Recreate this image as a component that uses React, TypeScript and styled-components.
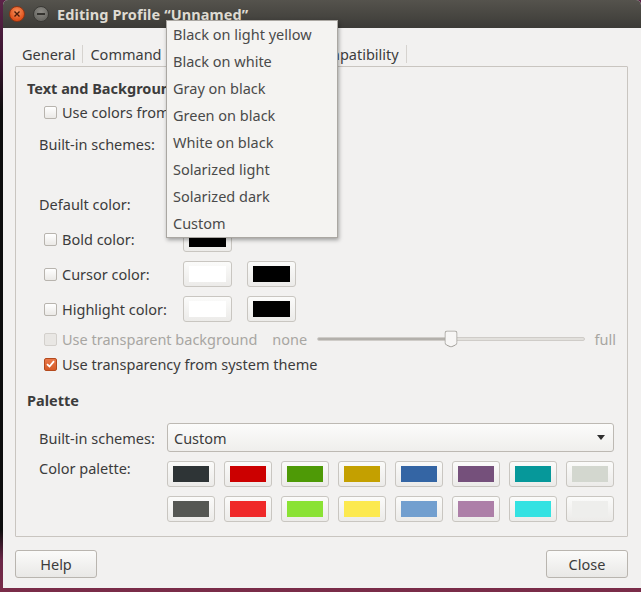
import React from "react";
import styled, { createGlobalStyle, css } from "styled-components";

const GlobalStyle = createGlobalStyle`
  html, body {
    margin: 0;
    padding: 0;
  }
  body {
    width: 641px;
    height: 592px;
    overflow: hidden;
    background: linear-gradient(
      to bottom,
      #5c2348 0,
      #3a1630 60px,
      #0d0d0d 110px,
      #0d0d0d 530px,
      #6a2747 560px,
      #7a2c48 100%
    );
    font-family: "Noto Sans", "DejaVu Sans", sans-serif;
    font-size: 14.5px;
    color: #3c3c3c;
  }
`;

const Window = styled.div`
  position: relative;
  margin-left: 3px;
  width: 638px;
  height: 588px;
  background: #f2f1f0;
  border-radius: 5px 5px 0 0;
  display: flex;
  flex-direction: column;
  overflow: hidden;
`;

const TitleBar = styled.div`
  height: 28px;
  flex: none;
  display: flex;
  align-items: center;
  gap: 8px;
  padding-left: 6px;
  background: linear-gradient(to bottom, #55534d, #3c3b37);
`;

const WinButton = styled.div<{ $kind: "close" | "min" }>`
  width: 16px;
  height: 16px;
  border-radius: 50%;
  display: flex;
  align-items: center;
  justify-content: center;
  box-sizing: border-box;
  ${(p) =>
    p.$kind === "close"
      ? css`
          background: radial-gradient(circle at 50% 35%, #f7945f, #e0501a 70%);
          border: 1px solid #8d3413;
        `
      : css`
          background: radial-gradient(circle at 50% 35%, #8e8c87, #6a6964 70%);
          border: 1px solid #3a3935;
        `}
`;

const Title = styled.div`
  font-weight: bold;
  font-size: 14.5px;
  color: #dfdbd2;
  letter-spacing: 0.1px;
`;

const Body = styled.div`
  flex: 1;
  display: flex;
  flex-direction: column;
  padding: 12px 13px 10px 12px;
`;

const Tabs = styled.div`
  height: 26px;
  display: flex;
  align-items: stretch;
`;

const Tab = styled.div`
  padding: 0 7px;
  display: flex;
  align-items: center;
  border-right: 1px solid #d6d3cf;
  margin: 5px 0 3px;
  line-height: 18px;
`;

const Frame = styled.div`
  height: 471px;
  box-sizing: border-box;
  border: 1px solid #c9c5c0;
  border-radius: 1px;
  padding: 11px 11px 0;
  display: flex;
  flex-direction: column;
`;

const Heading = styled.div<{ $gap?: number }>`
  font-weight: bold;
  line-height: 20px;
  margin-top: ${(p) => p.$gap ?? 0}px;
`;

const CheckRow = styled.label<{ $gap?: number; $disabled?: boolean }>`
  display: flex;
  align-items: center;
  gap: 5px;
  height: 20px;
  padding-left: 17px;
  margin-top: ${(p) => p.$gap ?? 0}px;
  color: ${(p) => (p.$disabled ? "#a8a6a2" : "#3c3c3c")};
  white-space: nowrap;
`;

const Box = styled.span<{ $checked?: boolean; $disabled?: boolean }>`
  width: 13px;
  height: 13px;
  box-sizing: border-box;
  border-radius: 2px;
  flex: none;
  display: inline-flex;
  align-items: center;
  justify-content: center;
  ${(p) =>
    p.$checked
      ? css`
          background: linear-gradient(#e8784a, #d65b27);
          border: 1px solid #b44a1d;
        `
      : p.$disabled
      ? css`
          background: #e9e7e4;
          border: 1px solid #d3d0cc;
        `
      : css`
          background: linear-gradient(#ffffff, #ebe9e6);
          border: 1px solid #b8b4ae;
        `}
`;

const ColorGrid = styled.div`
  display: grid;
  grid-template-columns: 129px 49px 49px;
  grid-template-rows: 28px 15px repeat(4, 26px);
  column-gap: 15px;
  row-gap: 9px;
  margin-top: 8px;
  padding-left: 12px;
  align-items: center;
`;

const GridLabel = styled.div<{ $check?: boolean }>`
  display: flex;
  align-items: center;
  gap: 5px;
  padding-left: ${(p) => (p.$check ? 5 : 0)}px;
  white-space: nowrap;
`;

const Combo = styled.div<{ $span?: string; $ml?: number }>`
  grid-column: ${(p) => p.$span ?? "auto"};
  margin-left: ${(p) => p.$ml ?? 0}px;
  height: 100%;
  box-sizing: border-box;
  border: 1px solid #bdb9b3;
  border-radius: 3px;
  background: linear-gradient(#fcfcfb, #efeeec);
  display: flex;
  align-items: center;
  justify-content: space-between;
  padding: 0 8px 0 6px;
`;

const Arrow = styled.span`
  width: 0;
  height: 0;
  border-left: 4px solid transparent;
  border-right: 4px solid transparent;
  border-top: 5px solid #2f2f2f;
`;

const ColorButton = styled.div<{ $w?: number }>`
  width: ${(p) => p.$w ?? 49}px;
  height: 26px;
  box-sizing: border-box;
  border: 1px solid #c9c6c1;
  border-radius: 3px;
  background: linear-gradient(#fbfbfa, #ecebe9);
  padding: 4px 5px;
  display: flex;
`;

const Swatch = styled.span<{ $c: string }>`
  flex: 1;
  background: ${(p) => p.$c};
`;

const SliderRow = styled.div`
  display: flex;
  align-items: center;
  height: 20px;
  margin-top: 7px;
`;

const Dim = styled.span<{ $ml?: number }>`
  color: #a8a6a2;
  margin-left: ${(p) => p.$ml ?? 0}px;
`;

const Track = styled.div`
  position: relative;
  flex: 1;
  height: 4px;
  margin: 0 10px;
  border-radius: 2px;
  box-sizing: border-box;
  border: 1px solid #cfccc8;
  background: linear-gradient(to right, #b3b0ab 50%, #e2e0dc 50%);
`;

const Knob = styled.svg`
  position: absolute;
  left: 50%;
  top: 50%;
  transform: translate(-50%, -50%);
`;

const PaletteGrid = styled.div`
  display: grid;
  grid-template-columns: 119px repeat(8, 48px);
  grid-template-rows: 29px 26px 26px;
  column-gap: 9px;
  row-gap: 9px;
  margin-top: 13px;
  padding-left: 12px;
  align-items: center;
`;

const PaletteLabel = styled.div`
  grid-row: 2;
  grid-column: 1;
  align-self: start;
  line-height: 15px;
`;

const Footer = styled.div`
  margin-top: 13px;
  display: flex;
  justify-content: space-between;
`;

const Button = styled.button`
  width: 82px;
  height: 28px;
  box-sizing: border-box;
  border: 1px solid #b9b5af;
  border-radius: 3px;
  background: linear-gradient(#fbfbfa, #e9e8e6);
  font: inherit;
  color: #3c3c3c;
  padding: 0;
`;

const Popup = styled.div`
  position: absolute;
  left: 163px;
  top: 20px;
  width: 172px;
  box-sizing: border-box;
  border: 1px solid #aaa7a2;
  background: #f4f3f1;
  box-shadow: 1px 2px 4px rgba(0, 0, 0, 0.35);
  display: flex;
  flex-direction: column;
`;

const MenuItem = styled.div`
  height: 27px;
  line-height: 27px;
  padding-left: 6px;
  color: #4a4a4a;
  white-space: nowrap;
`;

const Check = () => (
  <svg width="9" height="8" viewBox="0 0 9 8">
    <path d="M1 4.2 L3.5 6.5 L8 1.2" fill="none" stroke="#fff" strokeWidth="1.8" />
  </svg>
);

const palette1 = ["#2e3436", "#cc0000", "#4e9a06", "#c4a000", "#3465a4", "#75507b", "#06989a", "#d3d7cf"];
const palette2 = ["#555753", "#ef2929", "#8ae234", "#fce94f", "#729fcf", "#ad7fa8", "#34e2e2", "#eeeeec"];

const schemes = [
  "Black on light yellow",
  "Black on white",
  "Gray on black",
  "Green on black",
  "White on black",
  "Solarized light",
  "Solarized dark",
  "Custom",
];

export default function App() {
  return (
    <>
      <GlobalStyle />
      <Window>
        <TitleBar>
          <WinButton $kind="close">
            <svg width="6" height="6" viewBox="0 0 6 6">
              <path d="M0.5 0.5 L5.5 5.5 M5.5 0.5 L0.5 5.5" stroke="#4a1a08" strokeWidth="1.4" />
            </svg>
          </WinButton>
          <WinButton $kind="min">
            <svg width="8" height="2" viewBox="0 0 8 2">
              <rect width="8" height="2" fill="#34332f" />
            </svg>
          </WinButton>
          <Title>Editing Profile “Unnamed”</Title>
        </TitleBar>
        <Body>
          <Tabs>
            <Tab>General</Tab>
            <Tab>Command</Tab>
            <Tab>Colors</Tab>
            <Tab>Scrolling</Tab>
            <Tab>Compatibility</Tab>
          </Tabs>
          <Frame>
            <Heading>Text and Background Color</Heading>
            <CheckRow $gap={4}>
              <Box />
              Use colors from system theme
            </CheckRow>
            <ColorGrid>
              <GridLabel>Built-in schemes:</GridLabel>
              {/* combo sits under the open scheme list */}
              <Combo $span="2 / 4" $ml={-16}>
                <span />
                <Arrow />
              </Combo>
              <span />
              <span />
              <span />
              <GridLabel>Default color:</GridLabel>
              <ColorButton>
                <Swatch $c="#000000" />
              </ColorButton>
              <ColorButton>
                <Swatch $c="#ffffdd" />
              </ColorButton>
              <GridLabel $check>
                <Box />
                Bold color:
              </GridLabel>
              <ColorButton>
                <Swatch $c="#000000" />
              </ColorButton>
              <span />
              <GridLabel $check>
                <Box />
                Cursor color:
              </GridLabel>
              <ColorButton>
                <Swatch $c="#ffffff" />
              </ColorButton>
              <ColorButton>
                <Swatch $c="#000000" />
              </ColorButton>
              <GridLabel $check>
                <Box />
                Highlight color:
              </GridLabel>
              <ColorButton>
                <Swatch $c="#ffffff" />
              </ColorButton>
              <ColorButton>
                <Swatch $c="#000000" />
              </ColorButton>
            </ColorGrid>
            <SliderRow>
              <CheckRow $disabled>
                <Box $disabled />
                Use transparent background
              </CheckRow>
              <Dim $ml={15}>none</Dim>
              <Track>
                <Knob width="13" height="17" viewBox="0 0 13 17">
                  <path
                    d="M2.5 0.5 H10.5 Q12.5 0.5 12.5 2.5 V12 Q12.5 13.5 11 14.5 L6.5 16.5 L2 14.5 Q0.5 13.5 0.5 12 V2.5 Q0.5 0.5 2.5 0.5 Z"
                    fill="#f7f6f5"
                    stroke="#a19e99"
                  />
                </Knob>
              </Track>
              <Dim>full</Dim>
            </SliderRow>
            <CheckRow $gap={5}>
              <Box $checked>
                <Check />
              </Box>
              Use transparency from system theme
            </CheckRow>
            <Heading $gap={16}>Palette</Heading>
            <PaletteGrid>
              <GridLabel>Built-in schemes:</GridLabel>
              <Combo $span="2 / 10">
                Custom
                <Arrow />
              </Combo>
              <PaletteLabel>Color palette:</PaletteLabel>
              {palette1.map((c) => (
                <ColorButton key={c} $w={48}>
                  <Swatch $c={c} />
                </ColorButton>
              ))}
              <span />
              {palette2.map((c) => (
                <ColorButton key={c} $w={48}>
                  <Swatch $c={c} />
                </ColorButton>
              ))}
            </PaletteGrid>
          </Frame>
          <Footer>
            <Button>Help</Button>
            <Button>Close</Button>
          </Footer>
        </Body>
        <Popup>
          {schemes.map((s) => (
            <MenuItem key={s}>{s}</MenuItem>
          ))}
        </Popup>
      </Window>
    </>
  );
}
